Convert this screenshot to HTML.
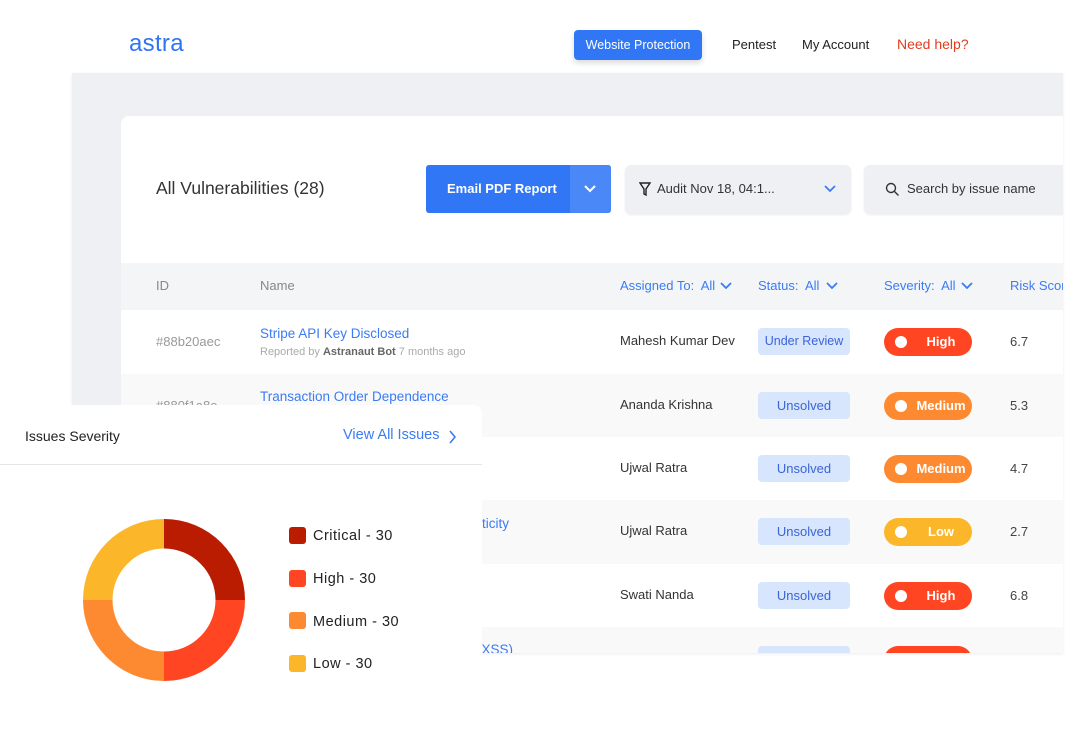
<!DOCTYPE html>
<html><head><meta charset="utf-8"><style>
*{margin:0;padding:0;box-sizing:border-box}
body{width:1080px;height:733px;background:#fff;position:relative;overflow:hidden;font-family:"Liberation Sans",sans-serif;color:#333}
.a{position:absolute}
.t{position:absolute;white-space:nowrap}
.bg{left:72px;top:73px;width:991px;height:580px;background:#eef0f4;box-shadow:0 1px 3px rgba(0,0,0,.08)}
.panel{left:121px;top:116px;width:942px;height:537px;background:#fff;border-radius:8px 0 0 0;overflow:hidden}
.row{position:absolute;left:0;width:942px;height:64px}
.st{position:absolute;width:92px;height:27px;border-radius:4px;background:#d8e6fd;color:#3a64d8;font-size:13px;text-align:center;line-height:27px}
.sv{position:absolute;width:88px;height:28px;border-radius:14px;color:#fff;font-size:13px;font-weight:bold;line-height:28px;padding-left:26px;text-align:center}
.sv:before{content:"";position:absolute;left:11px;top:8px;width:12px;height:12px;border-radius:50%;background:#fff}
.nm{font-size:13px;color:#333}
.sc{font-size:13px;color:#444}
.hd{font-size:13px;color:#3b7bf5}
</style></head><body>
<div class="t" style="left:129px;top:30px;font-size:24px;color:#2f74f2;letter-spacing:.3px">astra</div>
<div class="a" style="left:574px;top:30px;width:128px;height:30px;background:#3177f5;border-radius:4px;box-shadow:0 3px 6px rgba(0,0,0,.15);color:#fff;font-size:12.5px;text-align:center;line-height:30px">Website Protection</div>
<div class="t" style="left:732px;top:37px;font-size:13px;color:#222">Pentest</div>
<div class="t" style="left:802px;top:37px;font-size:13px;color:#222">My Account</div>
<div class="t" style="left:897px;top:36px;font-size:14px;color:#e23d1c">Need help?</div>

<div class="a bg"></div>
<div class="a panel">
  <div class="t" style="left:35px;top:62px;font-size:17.5px;color:#333">All Vulnerabilities (28)</div>
  <div class="a" style="left:305px;top:49px;width:185px;height:48px;background:#3177f5;border-radius:3px;overflow:hidden">
    <div class="t" style="left:21px;top:16px;color:#fff;font-weight:bold;font-size:13px">Email PDF Report</div>
    <div class="a" style="left:144px;top:0;width:41px;height:48px;background:#4a88f7"></div>
    <svg class="a" style="left:157px;top:18px" width="14" height="12"><path d="M2 3l5 5 5-5" stroke="#fff" stroke-width="2" fill="none"/></svg>
  </div>
  <div class="a" style="left:504px;top:49px;width:226px;height:49px;background:#eef0f4;border-radius:6px;box-shadow:0 1px 2px rgba(0,0,0,.08)">
    <svg class="a" style="left:14px;top:17px" width="12" height="14"><path d="M1 1h10L7 7v6L5 12V7z" stroke="#222" stroke-width="1.4" fill="none"/></svg>
    <div class="t" style="left:32px;top:16px;font-size:13px;color:#333">Audit Nov 18, 04:1...</div>
    <svg class="a" style="left:198px;top:18px" width="14" height="12"><path d="M2 3l5 5 5-5" stroke="#3b7bf5" stroke-width="1.8" fill="none"/></svg>
  </div>
  <div class="a" style="left:743px;top:49px;width:210px;height:49px;background:#eef0f4;border-radius:6px 0 0 6px;box-shadow:0 1px 2px rgba(0,0,0,.08)">
    <svg class="a" style="left:21px;top:17px" width="15" height="15"><circle cx="6" cy="6" r="4.5" stroke="#333" stroke-width="1.4" fill="none"/><path d="M9.5 9.5l4 4" stroke="#333" stroke-width="1.4"/></svg>
    <div class="t" style="left:43px;top:16px;font-size:13px;color:#333">Search by issue name</div>
  </div>
  <div class="row" style="top:147px;height:47px;background:#f3f5f7">
    <div class="t" style="left:35px;top:15px;font-size:13px;color:#888">ID</div>
    <div class="t" style="left:139px;top:15px;font-size:13px;color:#888">Name</div>
    <div class="t hd" style="left:499px;top:15px">Assigned To:&nbsp; All</div>
    <svg class="a" style="left:598px;top:17px" width="14" height="12"><path d="M2 3l5 5 5-5" stroke="#3b7bf5" stroke-width="1.8" fill="none"/></svg>
    <div class="t hd" style="left:637px;top:15px">Status:&nbsp; All</div>
    <svg class="a" style="left:704px;top:17px" width="14" height="12"><path d="M2 3l5 5 5-5" stroke="#3b7bf5" stroke-width="1.8" fill="none"/></svg>
    <div class="t hd" style="left:763px;top:15px">Severity:&nbsp; All</div>
    <svg class="a" style="left:839px;top:17px" width="14" height="12"><path d="M2 3l5 5 5-5" stroke="#3b7bf5" stroke-width="1.8" fill="none"/></svg>
    <div class="t hd" style="left:889px;top:15px">Risk Score</div>
  </div>
  <div class="row" style="top:194px;background:#fff">
    <div class="t" style="left:35px;top:24px;font-size:13px;color:#999">#88b20aec</div>
    <div class="t" style="left:139px;top:16px;font-size:13.5px;color:#3b7bf5">Stripe API Key Disclosed</div>
    <div class="t" style="left:139px;top:36px;font-size:11px;color:#aaa">Reported by <b style="color:#666">Astranaut Bot</b> 7 months ago</div>
    <div class="t nm" style="left:499px;top:23px">Mahesh Kumar Dev</div>
    <div class="st" style="left:637px;top:18px;font-size:12.5px">Under Review</div>
    <div class="sv" style="left:763px;top:18px;background:#ff4521">High</div>
    <div class="t sc" style="left:889px;top:24px">6.7</div>
  </div>
  <div class="row" style="top:258px;background:#f9f9f9">
    <div class="t" style="left:35px;top:24px;font-size:13px;color:#999">#880f1a8e</div>
    <div class="t" style="left:139px;top:15px;font-size:13.5px;color:#3b7bf5">Transaction Order Dependence</div>
    <div class="t nm" style="left:499px;top:23px">Ananda Krishna</div>
    <div class="st" style="left:637px;top:18px">Unsolved</div>
    <div class="sv" style="left:763px;top:18px;background:#fd8a30">Medium</div>
    <div class="t sc" style="left:889px;top:24px">5.3</div>
  </div>
  <div class="row" style="top:321px;background:#fff">
    <div class="t nm" style="left:499px;top:23px">Ujwal Ratra</div>
    <div class="st" style="left:637px;top:18px">Unsolved</div>
    <div class="sv" style="left:763px;top:18px;background:#fd8a30">Medium</div>
    <div class="t sc" style="left:889px;top:24px">4.7</div>
  </div>
  <div class="row" style="top:384px;background:#f9f9f9">
    <div class="t" style="left:361px;top:16px;font-size:13.5px;color:#3b7bf5">ticity</div>
    <div class="t nm" style="left:499px;top:23px">Ujwal Ratra</div>
    <div class="st" style="left:637px;top:18px">Unsolved</div>
    <div class="sv" style="left:763px;top:18px;background:#fbb629">Low</div>
    <div class="t sc" style="left:889px;top:24px">2.7</div>
  </div>
  <div class="row" style="top:448px;background:#fff">
    <div class="t nm" style="left:499px;top:23px">Swati Nanda</div>
    <div class="st" style="left:637px;top:18px">Unsolved</div>
    <div class="sv" style="left:763px;top:18px;background:#ff4521">High</div>
    <div class="t sc" style="left:889px;top:24px">6.8</div>
  </div>
  <div class="row" style="top:511px;background:#f9f9f9">
    <div class="t" style="left:356px;top:15px;font-size:13.5px;color:#3b7bf5">(XSS)</div>
    <div class="st" style="left:637px;top:19px">Unsolved</div>
    <div class="sv" style="left:763px;top:19px;background:#ff4521">High</div>
  </div>
</div>

<div class="a" style="left:0;top:405px;width:482px;height:328px;background:#fff;border-radius:0 8px 0 0">
  <div class="t" style="left:25px;top:23px;font-size:14px;color:#222">Issues Severity</div>
  <div class="t" style="left:343px;top:22px;font-size:14.5px;color:#3b7bf5">View All Issues</div>
  <svg class="a" style="left:447px;top:24px" width="12" height="16"><path d="M3 2l5 6-5 6" stroke="#3b7bf5" stroke-width="1.6" fill="none"/></svg>
  <div class="a" style="left:0;top:59px;width:482px;height:1px;background:#e6e6e6"></div>
  <svg class="a" style="left:83px;top:114px" width="162" height="162">
    <path d="M81 0A81 81 0 0 1 162 81H81z" fill="#b91c00"/>
    <path d="M162 81A81 81 0 0 1 81 162V81z" fill="#ff4521"/>
    <path d="M81 162A81 81 0 0 1 0 81H81z" fill="#fd8a30"/>
    <path d="M0 81A81 81 0 0 1 81 0V81z" fill="#fbb629"/>
    <circle cx="81" cy="81" r="51.5" fill="#fff"/>
  </svg>
  <div class="a" style="left:289px;top:122px;width:17px;height:17px;border-radius:3px;background:#b91c00"></div>
  <div class="t" style="left:313px;top:123px;font-size:14.5px;color:#222;letter-spacing:.5px">Critical - 30</div>
  <div class="a" style="left:289px;top:165px;width:17px;height:17px;border-radius:3px;background:#ff4521"></div>
  <div class="t" style="left:313px;top:166px;font-size:14.5px;color:#222;letter-spacing:.5px">High - 30</div>
  <div class="a" style="left:289px;top:207px;width:17px;height:17px;border-radius:3px;background:#fd8a30"></div>
  <div class="t" style="left:313px;top:209px;font-size:14.5px;color:#222;letter-spacing:.5px">Medium - 30</div>
  <div class="a" style="left:289px;top:250px;width:17px;height:17px;border-radius:3px;background:#fbb629"></div>
  <div class="t" style="left:313px;top:251px;font-size:14.5px;color:#222;letter-spacing:.5px">Low - 30</div>
</div>
</body></html>
